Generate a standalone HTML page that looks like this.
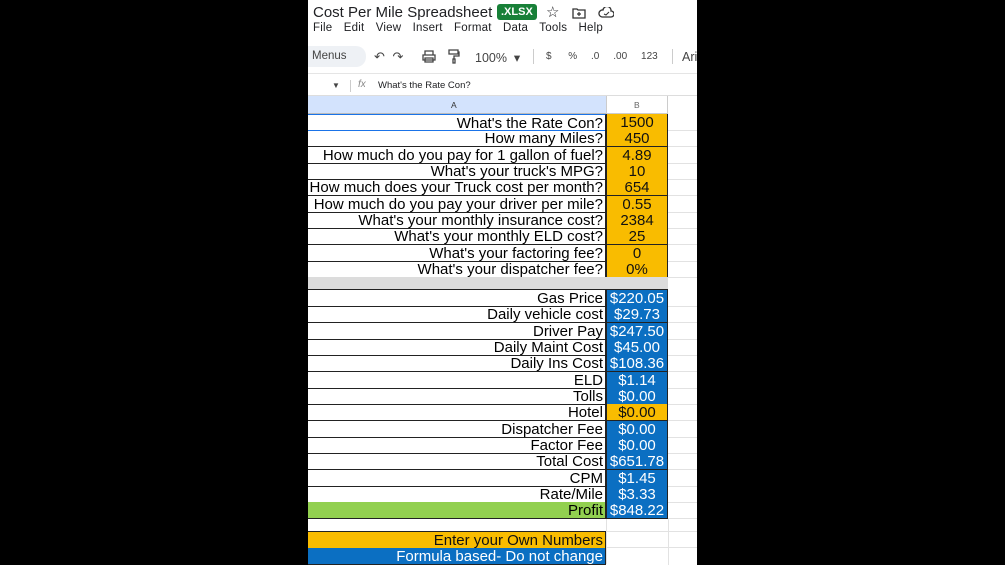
<!DOCTYPE html>
<html><head><meta charset="utf-8"><style>
*{margin:0;padding:0;box-sizing:border-box}
body{width:1005px;height:565px;background:#000;position:relative;overflow:hidden;font-family:"Liberation Sans",Arial,sans-serif}
#s{position:absolute;left:308px;top:0;width:389px;height:565px;background:#fff;overflow:hidden}
.t{position:absolute;white-space:nowrap;color:#202124}
.r{position:absolute;left:0;width:360px;height:17px;font-size:15px;line-height:17px;color:#000}
.a{position:absolute;left:0;width:298px;height:17px;text-align:right;padding-right:2px;border:1px solid #222;border-left:none;border-top:none;overflow:visible;white-space:nowrap;direction:rtl;line-height:17px}
.a span{direction:ltr;unicode-bidi:isolate}
.b{position:absolute;left:298px;width:62px;height:17px;text-align:center;border:1px solid #222;border-top:none;font-size:15px;line-height:17px}
.o{background:#f9bc00;color:#111}
.bl{background:#0b6fc2;color:#fff}
.g{background:#92d050}
.gl{position:absolute;left:360px;width:29px;height:17px;border-bottom:1px solid #e2e2e2}
</style></head><body>
<div id="s">
<div class="t" style="left:5px;top:4px;font-size:15px">Cost Per Mile Spreadsheet</div>
<div class="t" style="left:189px;top:4px;background:#188038;color:#fff;font-size:11px;font-weight:bold;padding:2px 4px;border-radius:3px">.XLSX</div>
<div class="t" style="left:238px;top:3px;font-size:15px">☆</div>
<svg style="position:absolute;left:264px;top:7px" width="14" height="12"><path d="M1 2h4l1 1h7v8H1z" fill="none" stroke="#333" stroke-width="1.3"/><path d="M7 5v4M5 7h4" stroke="#333" stroke-width="1.2"/></svg>
<svg style="position:absolute;left:290px;top:7px" width="16" height="12"><path d="M4 10h9a3 3 0 0 0 0-6 4 4 0 0 0-8-1 3.5 3.5 0 0 0-1 7z" fill="none" stroke="#333" stroke-width="1.3"/><path d="M6 7l2 1 3-3" fill="none" stroke="#333" stroke-width="1.1"/></svg>
<div class="t" style="left:5px;top:22px;font-size:11.5px;word-spacing:8px;letter-spacing:0.2px">File Edit View Insert Format Data Tools Help</div>
<div style="position:absolute;left:0;top:46px;width:58px;height:21px;background:#eef1f5;border-radius:0 10px 10px 0"></div>
<div class="t" style="left:4px;top:50px;font-size:11.5px;color:#444">Menus</div>
<div class="t" style="left:66px;top:49px;font-size:13px;color:#444;word-spacing:4px">↶ ↷</div>
<svg style="position:absolute;left:114px;top:50px" width="14" height="13"><path d="M3 5V1h8v4M1 5h12v5H1zM3 8h8v4H3z" fill="#fff" stroke="#444" stroke-width="1.3"/></svg>
<svg style="position:absolute;left:140px;top:49px" width="12" height="15"><path d="M1 1h9v4H1zM10 3h1v4H6v3M5 10h2v4H5z" fill="none" stroke="#444" stroke-width="1.3"/></svg>
<div class="t" style="left:167px;top:50px;font-size:12.5px;color:#444">100% &nbsp;▾</div>
<div style="position:absolute;left:225px;top:49px;width:1px;height:15px;background:#ccc"></div>
<div class="t" style="left:238px;top:51px;font-size:10px;color:#444">$&nbsp;&nbsp;&nbsp;&nbsp;&nbsp;&nbsp;%&nbsp;&nbsp;&nbsp;&nbsp;&nbsp;.0&nbsp;&nbsp;&nbsp;&nbsp;&nbsp;.00&nbsp;&nbsp;&nbsp;&nbsp;&nbsp;123</div>
<div style="position:absolute;left:364px;top:49px;width:1px;height:15px;background:#ccc"></div>
<div class="t" style="left:374px;top:50px;font-size:12.5px;color:#444">Ari</div>
<div style="position:absolute;left:0;top:73px;width:389px;height:1px;background:#e5e5e5"></div>
<div class="t" style="left:24px;top:81px;font-size:8px;color:#444">▼</div>
<div style="position:absolute;left:42px;top:80px;width:1px;height:12px;background:#ccc"></div>
<div class="t" style="left:50px;top:79px;font-size:10px;color:#888;font-style:italic">fx</div>
<div class="t" style="left:70px;top:80px;font-size:9.5px">What's the Rate Con?</div>
<div style="position:absolute;left:0;top:96px;width:298px;height:18px;background:#d3e3fd;border-bottom:1px solid #bbb"></div>
<div class="t" style="left:143px;top:100px;font-size:8.5px;color:#333">A</div>
<div style="position:absolute;left:298px;top:96px;width:62px;height:18px;border-left:1px solid #ccc;border-bottom:1px solid #ccc;border-right:1px solid #ccc"></div>
<div class="t" style="left:326px;top:100px;font-size:8.5px;color:#666">B</div>
<div style="position:absolute;left:0;top:95px;width:389px;height:1px;background:#ddd"></div>

<div class="r" style="top:114px"><div class="a" style="border-top:1px solid #1a73e8;border-bottom:1px solid #1a73e8"><span>What's the Rate Con?</span></div><div class="b o">1500</div></div><div class="gl" style="top:114px"></div>
<div class="r" style="top:130.3px"><div class="a"><span>How many Miles?</span></div><div class="b o">450</div></div><div class="gl" style="top:130.3px"></div>
<div class="r" style="top:146.6px"><div class="a"><span>How much do you pay for 1 gallon of fuel?</span></div><div class="b o">4.89</div></div><div class="gl" style="top:146.6px"></div>
<div class="r" style="top:163px"><div class="a"><span>What's your truck's MPG?</span></div><div class="b o">10</div></div><div class="gl" style="top:163px"></div>
<div class="r" style="top:179.3px"><div class="a"><span>How much does your Truck cost per month?</span></div><div class="b o">654</div></div><div class="gl" style="top:179.3px"></div>
<div class="r" style="top:195.6px"><div class="a"><span>How much do you pay your driver per mile?</span></div><div class="b o">0.55</div></div><div class="gl" style="top:195.6px"></div>
<div class="r" style="top:212px"><div class="a"><span>What's your monthly insurance cost?</span></div><div class="b o">2384</div></div><div class="gl" style="top:212px"></div>
<div class="r" style="top:228.3px"><div class="a"><span>What's your monthly ELD cost?</span></div><div class="b o">25</div></div><div class="gl" style="top:228.3px"></div>
<div class="r" style="top:244.6px"><div class="a"><span>What's your factoring fee?</span></div><div class="b o">0</div></div><div class="gl" style="top:244.6px"></div>
<div class="r" style="top:261px"><div class="a"><span>What's your dispatcher fee?</span></div><div class="b o">0%</div></div><div class="gl" style="top:261px"></div>
<div style="position:absolute;left:0;top:277px;width:360px;height:13px;background:#dcdcdc;border-bottom:1px solid #222"></div>

<div class="r" style="top:290px"><div class="a"><span>Gas Price</span></div><div class="b bl">$220.05</div></div><div class="gl" style="top:290px"></div>
<div class="r" style="top:306.3px"><div class="a"><span>Daily vehicle cost</span></div><div class="b bl">$29.73</div></div><div class="gl" style="top:306.3px"></div>
<div class="r" style="top:322.6px"><div class="a"><span>Driver Pay</span></div><div class="b bl">$247.50</div></div><div class="gl" style="top:322.6px"></div>
<div class="r" style="top:339px"><div class="a"><span>Daily Maint Cost</span></div><div class="b bl">$45.00</div></div><div class="gl" style="top:339px"></div>
<div class="r" style="top:355.3px"><div class="a"><span>Daily Ins Cost</span></div><div class="b bl">$108.36</div></div><div class="gl" style="top:355.3px"></div>
<div class="r" style="top:371.6px"><div class="a"><span>ELD</span></div><div class="b bl">$1.14</div></div><div class="gl" style="top:371.6px"></div>
<div class="r" style="top:388px"><div class="a"><span>Tolls</span></div><div class="b bl">$0.00</div></div><div class="gl" style="top:388px"></div>
<div class="r" style="top:404.3px"><div class="a"><span>Hotel</span></div><div class="b o">$0.00</div></div><div class="gl" style="top:404.3px"></div>
<div class="r" style="top:420.6px"><div class="a"><span>Dispatcher Fee</span></div><div class="b bl">$0.00</div></div><div class="gl" style="top:420.6px"></div>
<div class="r" style="top:437px"><div class="a"><span>Factor Fee</span></div><div class="b bl">$0.00</div></div><div class="gl" style="top:437px"></div>
<div class="r" style="top:453.3px"><div class="a"><span>Total Cost</span></div><div class="b bl">$651.78</div></div><div class="gl" style="top:453.3px"></div>
<div class="r" style="top:469.6px"><div class="a"><span>CPM</span></div><div class="b bl">$1.45</div></div><div class="gl" style="top:469.6px"></div>
<div class="r" style="top:486px"><div class="a"><span>Rate/Mile</span></div><div class="b bl">$3.33</div></div><div class="gl" style="top:486px"></div>
<div class="r" style="top:502.3px"><div class="a g"><span>Profit</span></div><div class="b bl">$848.22</div></div><div class="gl" style="top:502.3px"></div>
<div style="position:absolute;left:298px;top:519px;width:91px;height:45px;border-left:1px solid #e2e2e2"></div>
<div style="position:absolute;left:298px;top:531px;width:91px;height:1px;background:#e2e2e2"></div>
<div style="position:absolute;left:298px;top:547px;width:91px;height:1px;background:#e2e2e2"></div>
<div style="position:absolute;left:360px;top:519px;width:1px;height:46px;background:#e2e2e2"></div>
<div style="position:absolute;left:0;top:531px;width:298px;height:1px;background:#222"></div>
<div class="r" style="top:532px"><div class="a o"><span>Enter your Own Numbers</span></div></div>
<div class="r" style="top:548px"><div class="a bl"><span>Formula based- Do not change</span></div></div>
</div>
</body></html>
